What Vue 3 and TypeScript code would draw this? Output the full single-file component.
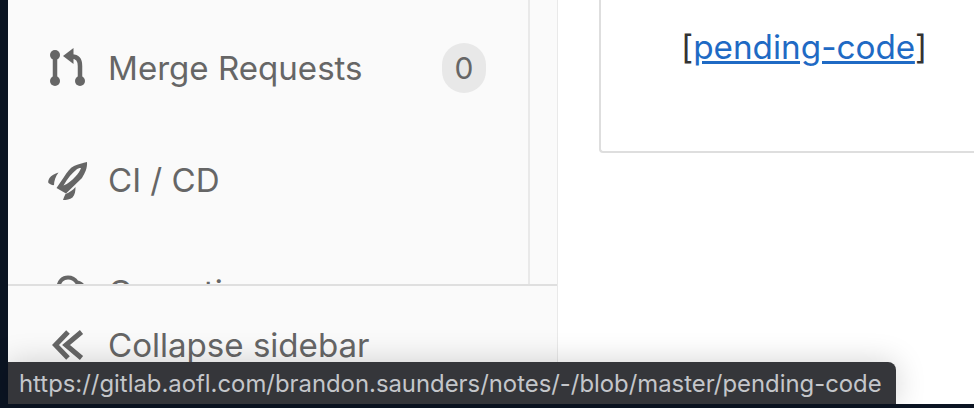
<script setup lang="ts">
const url = 'https://gitlab.aofl.com/brandon.saunders/notes/-/blob/master/pending-code'
</script>

<template>
  <div class="screen">
    <div class="desk">
      <aside class="sidebar">
        <nav class="nav">
          <div class="nav-list">
            <a class="item">
              <svg class="icon" viewBox="48 48 40 40" width="40" height="40">
                <circle cx="55" cy="55" r="5" fill="#666" />
                <circle cx="55" cy="81" r="5" fill="#666" />
                <circle cx="80" cy="81" r="5" fill="#666" />
                <path d="M55 55V81" stroke="#666" stroke-width="4.5" fill="none" />
                <path d="M71 56.500H72Q80 56.500 80 66V81" stroke="#666" stroke-width="4.500" fill="none" />
                <path d="M73.500 48V64L63 56Z" fill="#666" />
              </svg>
              <span class="label">Merge Requests</span>
              <span class="badge">0</span>
            </a>
            <a class="item">
              <svg class="icon" viewBox="48 160 40 40" width="40" height="40">
                <path fill="#666" fill-rule="evenodd" d="M87 162C87.500 168 85 173 82 178L66 193.500L56.500 188L64 177C67 172 70 168 74 166C78 164 83 163 87 162ZM81 168C79 168 77.500 168.500 76 170C72 173 68 178 63.500 185.500C68 184 72 180 75 177C78 174 80 171 81 168Z" />
                <path fill="#666" d="M58.500 172.500C55 173.500 51 175.500 49.500 178C48.500 180 47.800 182 48.500 183C50 184.500 53 185.500 54 185C54 181 55.500 176.500 58.500 172.500Z" />
                <path fill="#666" d="M75.500 187C73 190 69.500 192.500 65.500 194C64.500 196 63.500 198 63 200C66 200 70 199.500 72.500 197.500C75 195 75.500 191 75.500 187Z" />
              </svg>
              <span class="label">CI / CD</span>
            </a>
            <a class="item">
              <svg class="icon" viewBox="48 272 40 40" width="40" height="40">
                <path d="M58.500 288C58.500 281 63 277.500 68 277.500C72 277.500 75 279.500 77 282.500C79 282.500 81 283.500 83 286" stroke="#666" stroke-width="4" fill="none" />
              </svg>
              <span class="label">Operations</span>
            </a>
          </div>
          <div class="gutter"></div>
        </nav>
        <div class="collapse">
          <svg class="icon" viewBox="48 326 40 40" width="40" height="40">
            <path d="M68 333L55.500 346L68 359M81.500 333L66 346L81.500 359" stroke="#666" stroke-width="5" fill="none" />
          </svg>
          <span class="label">Collapse sidebar</span>
        </div>
      </aside>
      <main class="content">
        <section class="card">
          <p class="ref">[<a class="ref-link">pending-code</a>]</p>
        </section>
      </main>
    </div>
    <div class="status">{{ url }}</div>
  </div>
</template>

<style scoped>
.screen {
  width: 974px;
  height: 408px;
  box-sizing: border-box;
  position: relative;
  overflow: hidden;
  background: #0b1422;
  padding: 0 0 4px 8px;
  font-family: Inter, "Liberation Sans", sans-serif;
}
.desk {
  display: flex;
  height: 100%;
  background: #fff;
}
.sidebar {
  width: 550px;
  flex: none;
  box-sizing: border-box;
  display: flex;
  flex-direction: column;
  background: #fafafa;
  border-right: 1px solid #e9e9e9;
}
.nav {
  height: 284px;
  flex: none;
  display: flex;
  overflow: hidden;
  border-bottom: 2px solid #dfdfdf;
  box-sizing: content-box;
}
.nav-list {
  flex: none;
  width: 520px;
  border-right: 2px solid #e9e9e9;
  padding-top: 12px;
}
.gutter {
  flex: 1;
}
.item {
  display: flex;
  align-items: center;
  height: 112px;
  padding-left: 40px;
  padding-right: 42px;
}
.icon {
  flex: none;
  margin-right: 20px;
}
.label {
  font-size: 33.1px;
  color: #666;
  white-space: nowrap;
}
.badge {
  margin-left: auto;
  width: 44px;
  height: 50px;
  border-radius: 22px;
  background: #e8e8e8;
  color: #666;
  font-size: 30px;
  display: flex;
  align-items: center;
  justify-content: center;
}
.collapse {
  display: flex;
  align-items: center;
  height: 120px;
  padding-left: 40px;
}
.content {
  flex: 1;
  padding-left: 41px;
}
.card {
  height: 153px;
  box-sizing: border-box;
  background: #fff;
  border-left: 2px solid #dedede;
  border-bottom: 2px solid #dedede;
  border-bottom-left-radius: 4px;
  padding: 26px 0 0 33px;
  text-align: center;
}
.ref {
  margin: 0;
  font-size: 33.3px;
  line-height: 42px;
  color: #333;
}
.ref-link {
  color: #1f6ac4;
  text-decoration: underline;
}
.status {
  position: absolute;
  left: 8px;
  bottom: 4px;
  height: 42px;
  width: 888px;
  box-sizing: border-box;
  background: #35363a;
  color: #c4c6ca;
  font-size: 23.86px;
  line-height: 44px;
  padding-left: 11px;
  border-top-right-radius: 8px;
  box-shadow: 0 0 30px rgba(0, 0, 0, 0.18);
  white-space: nowrap;
}
</style>
